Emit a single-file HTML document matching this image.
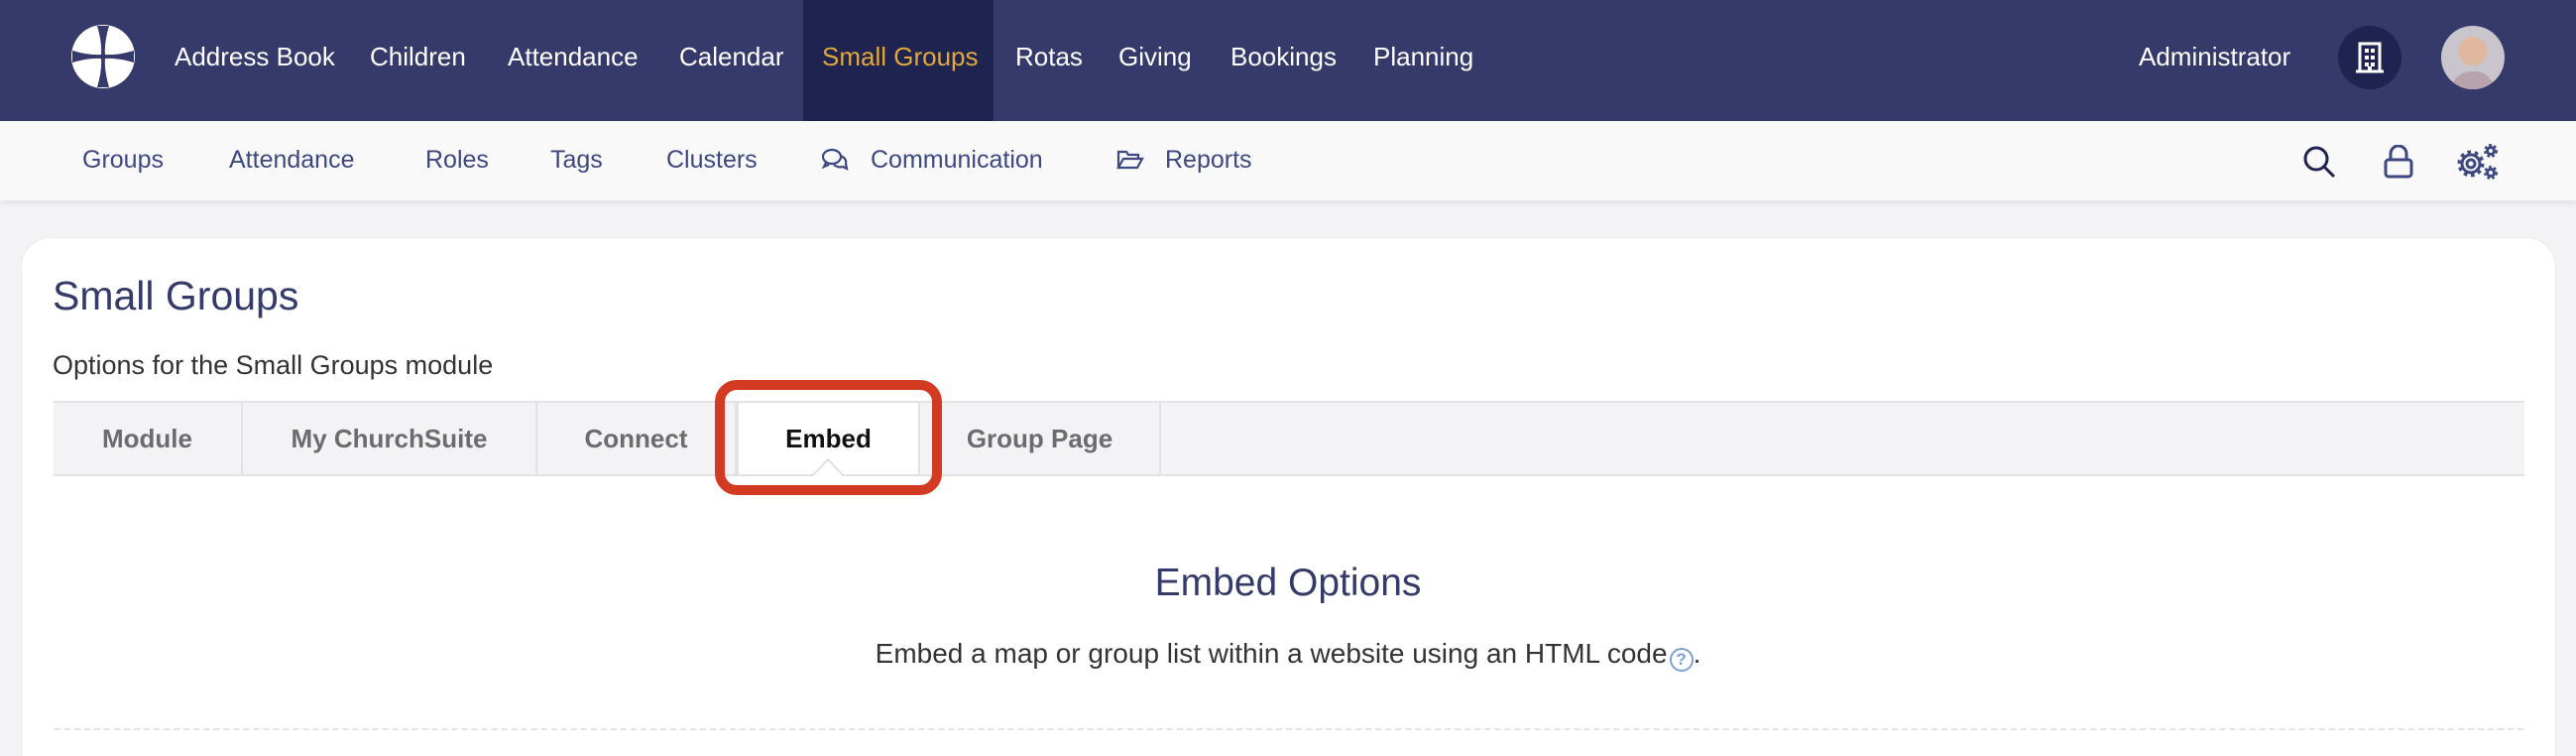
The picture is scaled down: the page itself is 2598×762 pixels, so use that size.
<!DOCTYPE html>
<html><head><meta charset="utf-8"><style>
*{margin:0;padding:0;box-sizing:border-box}
html,body{width:2598px;height:762px;overflow:hidden}
body{background:#f3f3f5;font-family:"Liberation Sans",sans-serif;position:relative}
.top{position:absolute;left:0;top:0;width:2598px;height:122px;background:#363a6a}
.top .act{position:absolute;left:810px;top:0;width:192px;height:122px;background:#1f2350}
.nt{position:absolute;top:42px;font-size:26px;color:#fff;white-space:nowrap}
.sub{position:absolute;left:0;top:122px;width:2598px;height:80px;background:#f9f9fa;box-shadow:0 3px 6px rgba(0,0,0,.08)}
.st{position:absolute;top:147px;font-size:25px;color:#3d4780;white-space:nowrap}
.card{position:absolute;left:21px;top:239px;width:2557px;height:523px;background:#fff;border-radius:30px 30px 0 0;border:1px solid #ebebef;border-bottom:none}
.tabs{position:absolute;left:54px;top:404px;width:2492px;height:76px;background:#f3f3f5;border-top:2px solid #e2e2e6;border-bottom:2px solid #e2e2e6}
.tab{position:absolute;top:0;height:72px;border-right:2px solid #e2e2e6;font-size:26px;color:#6b6b70;text-align:center;line-height:72px;font-weight:bold}
</style></head><body>
<div class="top"><div class="act"></div></div>
<svg style="position:absolute;left:72px;top:25px" width="64" height="64" viewBox="0 0 64 64"><circle cx="32" cy="32" r="32" fill="#fff"/><path d="M26 1 Q31 18 30 30 Q18 31 1 26 L1 38 Q18 33 30 34 Q31 46 26 63 L38 63 Q33 46 34 34 Q46 33 63 38 L63 26 Q46 31 34 30 Q33 18 38 1Z" fill="#363a6a"/></svg>
<div class="nt" style="left:176px">Address Book</div>
<div class="nt" style="left:373px">Children</div>
<div class="nt" style="left:512px">Attendance</div>
<div class="nt" style="left:685px">Calendar</div>
<div class="nt" style="left:829px;color:#e0a93a">Small Groups</div>
<div class="nt" style="left:1024px">Rotas</div>
<div class="nt" style="left:1128px">Giving</div>
<div class="nt" style="left:1241px">Bookings</div>
<div class="nt" style="left:1385px">Planning</div>
<div class="nt" style="left:2157px">Administrator</div>
<div style="position:absolute;left:2358px;top:26px;width:64px;height:64px;border-radius:50%;background:#1f2350"></div>
<svg style="position:absolute;left:2376px;top:42px" width="28" height="32" viewBox="0 0 28 32"><path d="M4 2h20v28H4z" fill="none" stroke="#fff" stroke-width="3"/><path d="M0 30h28" stroke="#fff" stroke-width="3"/><g fill="#fff"><rect x="9" y="7" width="4" height="4"/><rect x="15" y="7" width="4" height="4"/><rect x="9" y="14" width="4" height="4"/><rect x="15" y="14" width="4" height="4"/><rect x="9" y="21" width="4" height="4"/><rect x="15" y="21" width="4" height="4"/><rect x="12" y="25" width="4" height="5"/></g></svg>
<div style="position:absolute;left:2462px;top:26px;width:64px;height:64px;border-radius:50%;background:radial-gradient(circle at 50% 40%,#e0b8a0 0 14px,#c9c5cc 15px);overflow:hidden"><div style="position:absolute;left:10px;top:46px;width:44px;height:24px;background:#b7a2ae;border-radius:20px 20px 0 0"></div></div>
<div class="sub"></div>
<div class="st" style="left:83px">Groups</div>
<div class="st" style="left:231px">Attendance</div>
<div class="st" style="left:429px">Roles</div>
<div class="st" style="left:555px">Tags</div>
<div class="st" style="left:672px">Clusters</div>
<svg style="position:absolute;left:828px;top:149px" width="28" height="24" viewBox="0 0 28 24" fill="none" stroke="#3d4780" stroke-width="2.2"><ellipse cx="11" cy="9" rx="9" ry="7"/><path d="M5 15l-2 4 5-2"/><path d="M19 8c4 1 7 4 6 8l1 5-4-2c-3 1-7 0-9-2"/></svg>
<div class="st" style="left:878px">Communication</div>
<svg style="position:absolute;left:1126px;top:151px" width="28" height="20" viewBox="0 0 28 20" fill="none" stroke="#3d4780" stroke-width="2.2"><path d="M2 18V2h8l2 3h10v4"/><path d="M2 18l5-9h19l-5 9z"/></svg>
<div class="st" style="left:1175px">Reports</div>
<svg style="position:absolute;left:2322px;top:146px" width="34" height="34" viewBox="0 0 34 34" fill="none" stroke="#1f2350" stroke-width="3"><circle cx="14" cy="14" r="11"/><path d="M22 22l10 10"/></svg>
<svg style="position:absolute;left:2404px;top:146px" width="30" height="34" viewBox="0 0 30 34" fill="none" stroke="#3d4780" stroke-width="3"><path d="M7 15V9a8 8 0 0 1 16 0v6"/><rect x="2" y="15" width="26" height="17" rx="3"/></svg>
<svg style="position:absolute;left:2478px;top:145px" width="42" height="36" viewBox="0 0 42 36" fill="none" stroke="#3d4780"><circle cx="14" cy="20" r="4" stroke-width="3"/><circle cx="14" cy="20" r="9" stroke-width="3"/><circle cx="14" cy="20" r="11.5" stroke-dasharray="3.5 3.7" stroke-width="4"/><circle cx="34" cy="7" r="3.5" stroke-width="3"/><circle cx="34" cy="7" r="5.5" stroke-dasharray="2.5 2.3" stroke-width="3"/><circle cx="34" cy="29" r="3.5" stroke-width="3"/><circle cx="34" cy="29" r="5.5" stroke-dasharray="2.5 2.3" stroke-width="3"/></svg>
<div class="card"></div>
<div style="position:absolute;left:53px;top:275px;font-size:41px;color:#343a6a">Small Groups</div>
<div style="position:absolute;left:53px;top:353px;font-size:27px;color:#333">Options for the Small Groups module</div>
<div class="tabs">
<div class="tab" style="left:0;width:191px">Module</div>
<div class="tab" style="left:191px;width:297px">My ChurchSuite</div>
<div class="tab" style="left:488px;width:201px">Connect</div>
<div class="tab" style="left:689px;width:185px;background:#fff;color:#111;border-left:2px solid #e2e2e6">Embed</div>
<div class="tab" style="left:874px;width:243px">Group Page</div>
</div>
<svg style="position:absolute;left:819px;top:462px" width="32" height="18" viewBox="0 0 32 18"><path d="M0 18L16 1L32 18" fill="#fff" stroke="#d8d8dc" stroke-width="1.5"/></svg>
<div style="position:absolute;left:721px;top:383px;width:229px;height:116px;border:10px solid #d33a22;border-radius:22px"></div>
<div style="position:absolute;left:0;width:2598px;top:566px;text-align:center;font-size:39px;color:#343a6a">Embed Options</div>
<div style="position:absolute;left:0;width:2598px;top:643px;text-align:center;font-size:28px;color:#333">Embed a map or group list within a website using an HTML code<span style="display:inline-block;width:24px;height:24px;border:2px solid #7ba0d8;border-radius:50%;color:#7ba0d8;font-size:17px;line-height:20px;font-weight:bold;vertical-align:-2px;margin-left:2px">?</span>.</div>
<div style="position:absolute;left:55px;top:734px;width:2490px;border-top:2px dashed #e2e2e6"></div>
</body></html>
